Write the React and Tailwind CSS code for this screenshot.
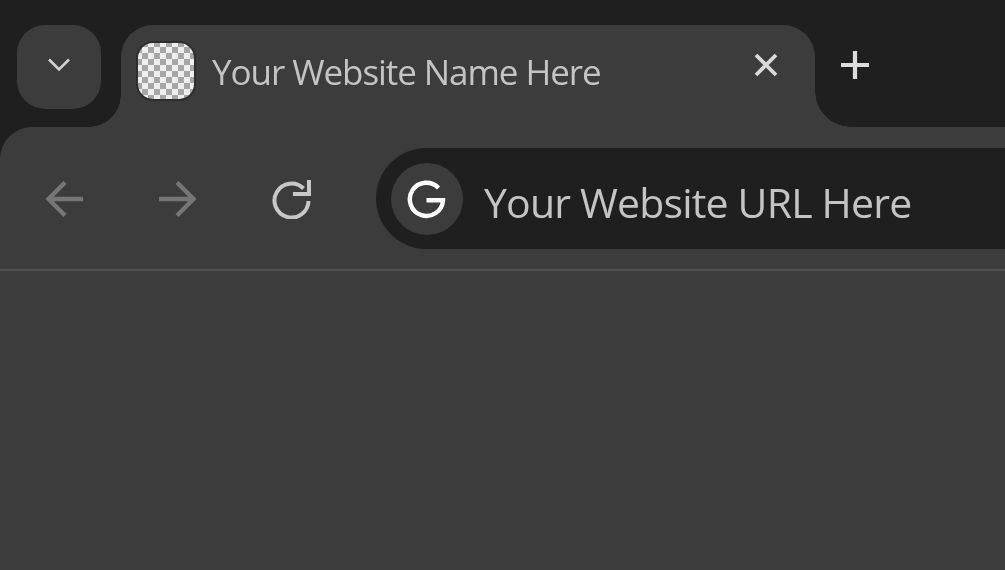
const TAB_BG = "bg-[#3c3c3c]";

function Chevron() {
  return (
    <svg width="24" height="16" viewBox="0 0 24 16" fill="none" stroke="#d2d2d2" strokeWidth="2.6">
      <path d="M2 2.5 L12 12.5 L22 2.5" />
    </svg>
  );
}

function CloseIcon() {
  return (
    <svg width="26" height="26" viewBox="0 0 26 26" fill="none" stroke="#dadada" strokeWidth="3.8">
      <path d="M3 3 L23 23 M23 3 L3 23" />
    </svg>
  );
}

function PlusIcon() {
  return (
    <svg width="30" height="30" viewBox="0 0 30 30" fill="none" stroke="#dcdcdc" strokeWidth="4.2">
      <path d="M15 1 V29 M1 15 H29" />
    </svg>
  );
}

function ArrowLeft() {
  return (
    <svg width="38" height="38" viewBox="0 0 38 38" fill="none" stroke="#767676" strokeWidth="4.4">
      <path d="M20 2.5 L3.5 19 L20 35.5 M3.5 19 H38" />
    </svg>
  );
}

function ArrowRight() {
  return (
    <svg width="38" height="38" viewBox="0 0 38 38" fill="none" stroke="#767676" strokeWidth="4.4">
      <path d="M18 2.5 L34.5 19 L18 35.5 M34.5 19 H0" />
    </svg>
  );
}

function ReloadIcon() {
  return (
    <svg width="40" height="40" viewBox="0 0 40 40" fill="none" stroke="#c8c8c8" strokeWidth="4">
      <path d="M31.5 9.5 A17 17 0 1 0 36.5 22" />
      <path d="M37 1 V15 H21" />
    </svg>
  );
}

function GoogleG() {
  return (
    <svg width="40" height="40" viewBox="0 0 40 40" fill="none" stroke="#ffffff" strokeWidth="4.4">
      <path d="M31.5 8.9 A16.6 16.6 0 1 0 36 21.3 H19.5" />
    </svg>
  );
}

export default function App() {
  return (
    <div className="h-[570px] w-[1005px] overflow-hidden bg-[#1f1f1f] flex flex-col font-['Open_Sans',sans-serif]">
      <div className="h-[127px] shrink-0 pt-[25px] pl-[17px] flex items-start">
        <button className="w-[84px] h-[84px] rounded-[28px] bg-[#3c3c3c] flex items-center justify-center pb-[4px]">
          <Chevron />
        </button>

        <div className={`relative ml-[20px] w-[694px] h-[102px] rounded-t-[32px] ${TAB_BG} flex items-start pl-[15px] pt-[16px]`}>
          <div className="absolute left-[-32px] bottom-0 w-[32px] h-[32px] bg-[radial-gradient(circle_at_0_0,transparent_31.5px,#3c3c3c_32px)]" />
          <div className="absolute right-[-36px] bottom-0 w-[36px] h-[36px] bg-[radial-gradient(circle_at_100%_0,transparent_35.5px,#3c3c3c_36px)]" />

          <div className="w-[60px] h-[60px] rounded-[17px] border-2 border-[#2e2e2e] bg-[#eeeeee] bg-[repeating-conic-gradient(#a6a6a6_0_25%,#eeeeee_0_50%)] bg-[length:12px_12px] bg-[position:-2px_-2px]" />
          <span className="ml-[16px] mt-[9px] text-[35px] leading-[44px] tracking-[-1.06px] text-[#c4c4c4] whitespace-nowrap transform-gpu">
            Your Website Name Here
          </span>
          <span className="ml-auto mr-[36px] mt-[11px]">
            <CloseIcon />
          </span>
        </div>

        <span className="ml-[25px] mt-[25px]">
          <PlusIcon />
        </span>
      </div>

      <div className="flex-1 bg-[#3c3c3c] rounded-tl-[32px]">
        <div className="h-[144px] border-b-2 border-[#505050] flex items-start pl-[45px]">
          <span className="mt-[53px]">
            <ArrowLeft />
          </span>
          <span className="ml-[76px] mt-[53px]">
            <ArrowRight />
          </span>
          <span className="ml-[75px] mt-[52px]">
            <ReloadIcon />
          </span>
          <div className="ml-[64px] mt-[21px] flex-1 h-[101px] rounded-l-[51px] bg-[#1f1f1f] flex items-center pl-[15px]">
            <div className="w-[72px] h-[72px] rounded-full bg-[#3c3c3c] flex items-center justify-center">
              <GoogleG />
            </div>
            <span className="ml-[21px] mt-[6px] text-[41px] leading-[50px] tracking-[-0.82px] text-[#c4c4c4] whitespace-nowrap transform-gpu">
              Your Website URL Here
            </span>
          </div>
        </div>
      </div>
    </div>
  );
}
